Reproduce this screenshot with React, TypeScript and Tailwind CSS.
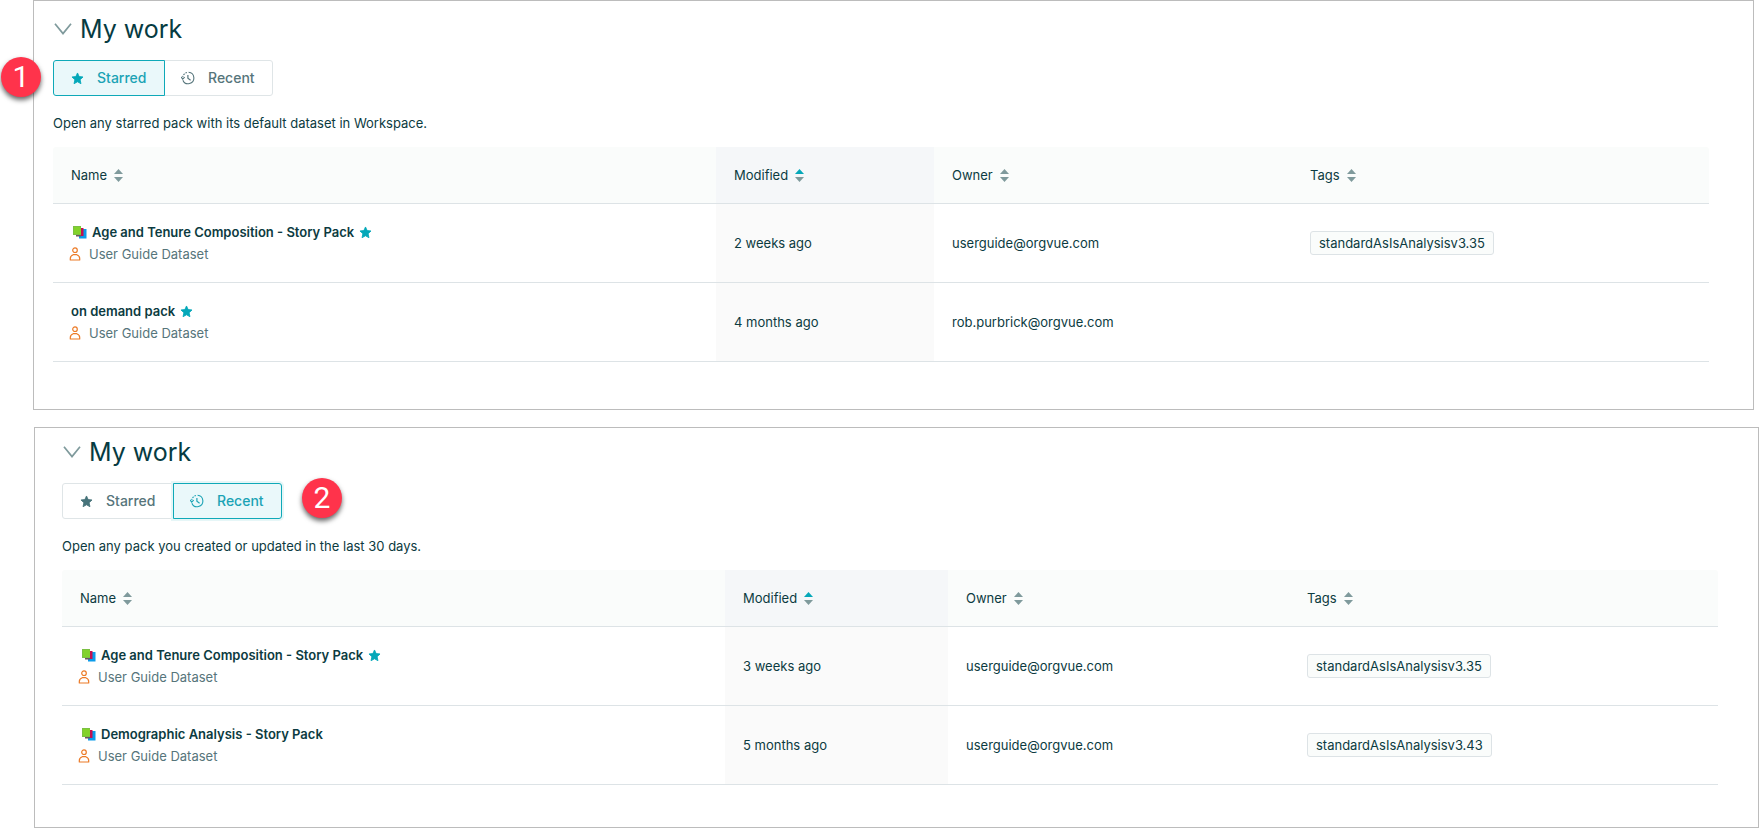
import { useState } from "react";
import clsx from "clsx";

type Tab = "starred" | "recent";

interface Pack {
  name: string;
  dataset: string;
  modified: string;
  owner: string;
  tag?: string;
  starred?: boolean;
  story?: boolean;
}

const starredPacks: Pack[] = [
  {
    name: "Age and Tenure Composition - Story Pack",
    dataset: "User Guide Dataset",
    modified: "2 weeks ago",
    owner: "userguide@orgvue.com",
    tag: "standardAsIsAnalysisv3.35",
    starred: true,
    story: true,
  },
  {
    name: "on demand pack",
    dataset: "User Guide Dataset",
    modified: "4 months ago",
    owner: "rob.purbrick@orgvue.com",
    starred: true,
  },
];

const recentPacks: Pack[] = [
  {
    name: "Age and Tenure Composition - Story Pack",
    dataset: "User Guide Dataset",
    modified: "3 weeks ago",
    owner: "userguide@orgvue.com",
    tag: "standardAsIsAnalysisv3.35",
    starred: true,
    story: true,
  },
  {
    name: "Demographic Analysis - Story Pack",
    dataset: "User Guide Dataset",
    modified: "5 months ago",
    owner: "userguide@orgvue.com",
    tag: "standardAsIsAnalysisv3.43",
    story: true,
  },
];

function StarIcon({ className }: { className?: string }) {
  return (
    <svg viewBox="0 0 12 12" className={clsx("h-[13px] w-[13px] shrink-0", className)} fill="currentColor" aria-hidden="true">
      <path
        d="M6 .9l1.5 3.3 3.6.4-2.7 2.5.8 3.7L6 9l-3.2 1.8.8-3.7L.9 4.6l3.6-.4z"
        stroke="currentColor"
        strokeWidth=".8"
        strokeLinejoin="round"
      />
    </svg>
  );
}

function HistoryIcon() {
  return (
    <svg viewBox="0 0 14 14" className="h-3.5 w-3.5 shrink-0" fill="none" stroke="currentColor" aria-hidden="true">
      <path d="M1.9 9.2A5.7 5.7 0 1 0 7.6 1.3" strokeWidth="1.1" />
      <path d="M5.9 1.5A5.7 5.7 0 0 0 1.7 6.2" strokeWidth="1.1" strokeDasharray="1.6 1" />
      <path d="M0 5.9l1.7 2.2 2-1.9" strokeWidth="1.1" />
      <path d="M6.9 3.9v3.4l2.7 1.9" strokeWidth="1.2" />
    </svg>
  );
}

function ChevronIcon() {
  return (
    <svg viewBox="0 0 18 12" className="h-3 w-[18px] shrink-0" fill="none" stroke="#7f9a9c" strokeWidth="1.7" aria-hidden="true">
      <path d="M1 .8l8 9.8 8-9.8" />
    </svg>
  );
}

function SortIcon({ active }: { active?: boolean }) {
  return (
    <svg viewBox="0 0 9 13" className="h-[13px] w-[9px] shrink-0" aria-hidden="true">
      <path d="M4.5 0L9 5H0z" fill={active ? "#05a8b9" : "#7f9a9c"} />
      <path d="M0 8h9l-4.500 5z" fill="#7f9a9c" />
    </svg>
  );
}

function StoryIcon() {
  return (
    <svg viewBox="0 0 14 13" className="ml-0.5 h-[13px] w-3.5 shrink-0" aria-hidden="true">
      <rect x="6" y="3" width="7.500" height="9.500" fill="#0b9bea" />
      <rect x="3" y="2" width="7.500" height="8" fill="#c4104f" />
      <rect x="3" y="8.500" width="5" height="2" fill="#6d5660" />
      <rect x="0" y="0" width="8" height="9" fill="#7bc043" />
      <rect x="1" y="1" width="7" height="7" fill="#82d22b" />
    </svg>
  );
}

function PersonIcon() {
  return (
    <svg viewBox="0 0 12 14" className="h-3.5 w-3 shrink-0" fill="none" stroke="#ec7a26" strokeWidth="1.2" aria-hidden="true">
      <circle cx="6" cy="3.200" r="2.300" />
      <path d="M1.300 13v-1.600c0-2 1.500-3.200 2.900-3.700h3.600c1.400.5 2.900 1.700 2.900 3.700V13z" strokeLinejoin="round" />
    </svg>
  );
}

function Callout({ label, className }: { label: string; className: string }) {
  return (
    <span
      className={clsx(
        "absolute flex h-10 w-10 items-center justify-center rounded-full bg-[#ff334b] font-[Roboto,sans-serif] text-[30px] leading-none text-white shadow-[0_3px_5px_rgba(0,0,0,0.6)]",
        className,
      )}
    >
      {label}
    </span>
  );
}

function TabButton({
  tab,
  selected,
  ring,
  onSelect,
}: {
  tab: Tab;
  selected: boolean;
  ring?: boolean;
  onSelect: (tab: Tab) => void;
}) {
  return (
    <button
      type="button"
      aria-pressed={selected}
      onClick={() => onSelect(tab)}
      className={clsx(
        "flex items-center gap-[13px] border text-sm font-medium",
        tab === "starred" ? "w-28 rounded-l-[3px] pl-[17px]" : "-ml-px w-[109px] rounded-r-[3px] pl-4",
        selected ? "z-10 border-[#0fa9b8] bg-[#eaf8fa] text-[#1ba3b5]" : "border-[#dfe5e7] bg-white text-[#56757b]",
        selected && ring && "ring-2 ring-[#e6f6f7]",
      )}
    >
      {tab === "starred" ? <StarIcon className={selected ? "text-[#05a8b9]" : "text-[#47737a]"} /> : <HistoryIcon />}
      {tab === "starred" ? "Starred" : "Recent"}
    </button>
  );
}

interface WorkPanelProps {
  initialTab: Tab;
  description: string;
  packs: Pack[];
  ring?: boolean;
  className: string;
  modifiedWidth: string;
  ownerWidth: string;
  tagsWidth: string;
}

function WorkPanel({
  initialTab,
  description,
  packs,
  ring,
  className,
  modifiedWidth,
  ownerWidth,
  tagsWidth,
}: WorkPanelProps) {
  const [tab, setTab] = useState<Tab>(initialTab);
  const columns = [
    { title: "Name", width: "" },
    { title: "Modified", width: modifiedWidth },
    { title: "Owner", width: ownerWidth },
    { title: "Tags", width: tagsWidth },
  ];

  return (
    <section className={clsx("border border-[#bcbcbc]", className)}>
      <h2 className="flex h-8 items-center gap-2 pl-px text-[25px] leading-8 text-[#063b42]">
        <ChevronIcon />
        My work
      </h2>
      <div className="mt-[15px] flex h-9">
        <TabButton tab="starred" selected={tab === "starred"} ring={ring} onSelect={setTab} />
        <TabButton tab="recent" selected={tab === "recent"} ring={ring} onSelect={setTab} />
      </div>
      <p className="mt-[17px] mb-[14px]">{description}</p>
      <table className="w-full table-fixed border-separate border-spacing-0 text-left">
        <thead>
          <tr>
            {columns.map(({ title, width }) => (
              <th
                key={title}
                className={clsx(
                  "h-[57px] border-b border-[#dde3e6] px-[18px] py-0 font-normal first:rounded-tl-[3px] last:rounded-tr-[3px]",
                  title === "Modified" ? "bg-[#f5f7f9]" : "bg-[#fafcfb]",
                  width,
                )}
              >
                <button type="button" className="flex items-center gap-[7px]">
                  {title}
                  <SortIcon active={title === "Modified"} />
                </button>
              </th>
            ))}
          </tr>
        </thead>
        <tbody>
          {packs.map((pack) => (
            <tr key={pack.name}>
              <td className="h-[79px] border-b border-[#dde3e6] px-[18px] py-0">
                <div className="flex h-[22px] items-center gap-[5px] font-semibold">
                  {pack.story && <StoryIcon />}
                  <a href="#pack">{pack.name}</a>
                  {pack.starred && <StarIcon className="text-[#05a8b9]" />}
                </div>
                <div className="-ml-0.5 flex h-[22px] items-center gap-2 text-[#56757b]">
                  <PersonIcon />
                  {pack.dataset}
                </div>
              </td>
              <td className="border-b border-[#dde3e6] bg-[#fafafa] px-[18px] py-0">{pack.modified}</td>
              <td className="border-b border-[#dde3e6] px-[18px] py-0">{pack.owner}</td>
              <td className="border-b border-[#dde3e6] px-[18px] py-0">
                {pack.tag && (
                  <span className="inline-flex h-6 items-center rounded-[3px] border border-[#dde3e6] bg-[#fafcfb] px-2">
                    {pack.tag}
                  </span>
                )}
              </td>
            </tr>
          ))}
        </tbody>
      </table>
    </section>
  );
}

export default function App() {
  return (
    <main className="relative flex flex-col gap-[17px] bg-white pl-[33px] font-[Inter,sans-serif] text-[13px] leading-5 text-[#0c3b41]">
      <WorkPanel
        initialTab="starred"
        description="Open any starred pack with its default dataset in Workspace."
        packs={starredPacks}
        className="mr-[5px] pt-3 pr-11 pb-[47px] pl-[19px]"
        modifiedWidth="w-[218px]"
        ownerWidth="w-[358px]"
        tagsWidth="w-[417px]"
      />
      <WorkPanel
        initialTab="recent"
        description="Open any pack you created or updated in the last 30 days."
        packs={recentPacks}
        ring
        className="ml-px pt-2 pr-10 pb-[42px] pl-[27px]"
        modifiedWidth="w-[223px]"
        ownerWidth="w-[341px]"
        tagsWidth="w-[429px]"
      />
      <Callout label="1" className="top-[57px] left-px" />
      <Callout label="2" className="top-[478px] left-[302px]" />
    </main>
  );
}
